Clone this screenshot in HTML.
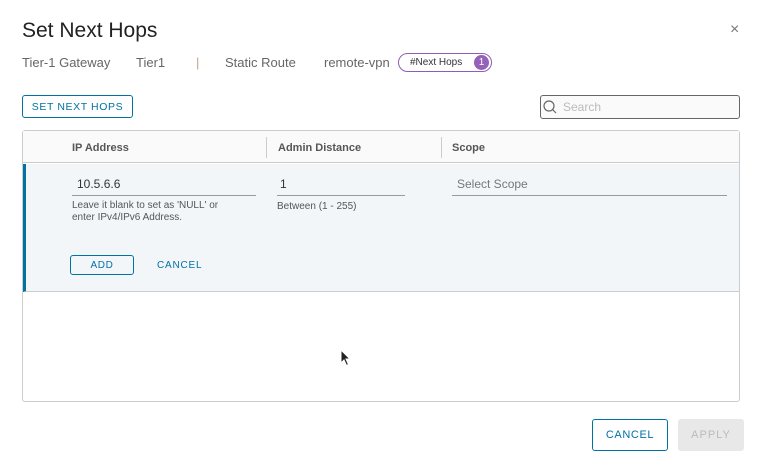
<!DOCTYPE html>
<html><head><style>
*{margin:0;padding:0;box-sizing:border-box}
body{width:759px;height:470px;background:#fff;font-family:"Liberation Sans",sans-serif;position:relative;overflow:hidden;color:#333}
.a{position:absolute;white-space:nowrap}
.btn{position:absolute;border:1px solid #0072a3;border-radius:3px;color:#0072a3;font-size:11px;letter-spacing:0.6px;display:flex;align-items:center;justify-content:center}
.hd{font-size:11px;font-weight:bold;color:#565656;top:142px}
.ul{position:absolute;height:1px;background:#9a9a9a}
</style></head><body>
<div class="a" style="left:22px;top:19px;font-size:21px;color:#222">Set Next Hops</div>
<div class="a" style="left:730px;top:21px;font-size:16px;color:#777">×</div>
<div class="a" style="left:22px;top:55px;font-size:13px;color:#666">Tier-1 Gateway</div>
<div class="a" style="left:136px;top:55px;font-size:13px;color:#666">Tier1</div>
<div class="a" style="left:196px;top:55px;font-size:13px;color:#c9a090">|</div>
<div class="a" style="left:225px;top:55px;font-size:13px;color:#666">Static Route</div>
<div class="a" style="left:324px;top:55px;font-size:13px;color:#666">remote-vpn</div>
<div class="a" style="left:398px;top:53px;width:94px;height:19px;border:1.5px solid #8f5db7;border-radius:10px"></div>
<div class="a" style="left:410px;top:57px;font-size:10px;color:#333">#Next Hops</div>
<div class="a" style="left:474px;top:55px;width:15px;height:15px;border-radius:8px;background:#9460b8;color:#fff;text-align:center;font-size:10px;line-height:15px">1</div>
<div class="btn" style="left:22px;top:95px;width:111px;height:23px;font-size:10.5px">SET NEXT HOPS</div>
<div class="a" style="left:540px;top:95px;width:200px;height:24px;border:1px solid #666;border-radius:3px;background:#fafafa"></div>
<svg class="a" style="left:542px;top:99px" width="16" height="16"><circle cx="7" cy="7" r="5" fill="none" stroke="#666" stroke-width="1.2"/><line x1="10.5" y1="10.5" x2="14" y2="14" stroke="#666" stroke-width="1.2"/></svg>
<div class="a" style="left:563px;top:100px;font-size:12px;color:#bbb">Search</div>
<div class="a" style="left:22px;top:130px;width:718px;height:272px;border:1px solid #ccc;border-radius:3px;background:#fff"></div>
<div class="a" style="left:23px;top:131px;width:716px;height:32px;background:#fafafa;border-bottom:1px solid #ccc"></div>
<div class="a" style="left:266px;top:137px;width:1px;height:21px;background:#ccc"></div>
<div class="a" style="left:441px;top:137px;width:1px;height:21px;background:#ccc"></div>
<div class="a hd" style="left:72px">IP Address</div>
<div class="a hd" style="left:278px">Admin Distance</div>
<div class="a hd" style="left:452px">Scope</div>
<div class="a" style="left:23px;top:164px;width:716px;height:128px;background:#f3f6f9;border-bottom:1px solid #ccc;border-left:3px solid #0072a3"></div>
<div class="a" style="left:77px;top:177px;font-size:12px;color:#333">10.5.6.6</div>
<div class="ul" style="left:72px;top:195px;width:184px"></div>
<div class="a" style="left:280px;top:177px;font-size:12px;color:#333">1</div>
<div class="ul" style="left:277px;top:195px;width:128px"></div>
<div class="a" style="left:457px;top:177px;font-size:12px;color:#777">Select Scope</div>
<div class="ul" style="left:452px;top:195px;width:275px"></div>
<div class="a" style="left:72px;top:200px;font-size:10px;color:#555;line-height:12px">Leave it blank to set as 'NULL' or<br>enter IPv4/IPv6 Address.</div>
<div class="a" style="left:277px;top:201px;font-size:10px;color:#555">Between (1 - 255)</div>
<div class="btn" style="left:70px;top:255px;width:64px;height:20px;font-size:10px">ADD</div>
<div class="a" style="left:157px;top:260px;font-size:10px;color:#0072a3;letter-spacing:0.8px">CANCEL</div>
<svg class="a" style="left:340px;top:349px" width="12" height="18"><path d="M1 1 L1 14 L4 11 L6.5 16.5 L8.5 15.5 L6 10 L10 10 Z" fill="#222" stroke="#fff" stroke-width="1"/></svg>
<div class="btn" style="left:592px;top:419px;width:76px;height:32px;font-size:11px">CANCEL</div>
<div class="a" style="left:678px;top:419px;width:66px;height:32px;background:#e8e8e8;border-radius:3px;color:#bbb;font-size:11px;letter-spacing:1px;text-align:center;line-height:32px">APPLY</div>
</body></html>
